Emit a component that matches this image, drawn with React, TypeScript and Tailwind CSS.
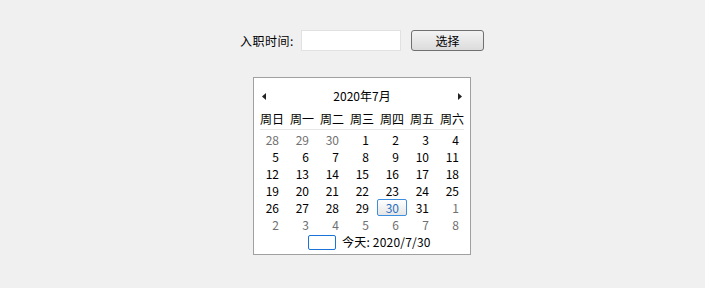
import React from 'react';

const font = { fontFamily: '"Noto Sans CJK SC", "Noto Sans", sans-serif' };

const weekNames = ['周日', '周一', '周二', '周三', '周四', '周五', '周六'];

type Day = { n: number; muted?: boolean; selected?: boolean };

const weeks: Day[][] = [
  [{ n: 28, muted: true }, { n: 29, muted: true }, { n: 30, muted: true }, { n: 1 }, { n: 2 }, { n: 3 }, { n: 4 }],
  [{ n: 5 }, { n: 6 }, { n: 7 }, { n: 8 }, { n: 9 }, { n: 10 }, { n: 11 }],
  [{ n: 12 }, { n: 13 }, { n: 14 }, { n: 15 }, { n: 16 }, { n: 17 }, { n: 18 }],
  [{ n: 19 }, { n: 20 }, { n: 21 }, { n: 22 }, { n: 23 }, { n: 24 }, { n: 25 }],
  [{ n: 26 }, { n: 27 }, { n: 28 }, { n: 29 }, { n: 30, selected: true }, { n: 31 }, { n: 1, muted: true }],
  [
    { n: 2, muted: true },
    { n: 3, muted: true },
    { n: 4, muted: true },
    { n: 5, muted: true },
    { n: 6, muted: true },
    { n: 7, muted: true },
    { n: 8, muted: true },
  ],
];

const Arrow: React.FC<{ dir: 'left' | 'right' }> = ({ dir }) => (
  <svg width="4" height="7" viewBox="0 0 4 7">
    {dir === 'left' ? <polygon points="4,0 4,7 0,3.5" fill="#222" /> : <polygon points="0,0 0,7 4,3.5" fill="#222" />}
  </svg>
);

const Calendar: React.FC = () => (
  <div className="w-[218px] h-[178px] border border-[#a0a0a0] bg-white flex flex-col text-[12px] leading-none" style={font}>
    <div className="h-[26px] mt-[5px] flex items-center px-[8px]">
      <Arrow dir="left" />
      <div className="flex-1 text-center text-black">2020年7月</div>
      <Arrow dir="right" />
    </div>
    <div className="flex pl-[3px] h-[20px] items-center">
      {weekNames.map((w) => (
        <div key={w} className="w-[30px] text-center text-black">
          {w}
        </div>
      ))}
    </div>
    <div className="mx-[6px] h-px bg-[#e6e6e6]" />
    <div className="flex flex-col pl-[3px] mt-[1px]">
      {weeks.map((week, i) => (
        <div key={i} className="flex h-[17px]">
          {week.map((d, j) => (
            <div
              key={j}
              className={
                d.selected
                  ? 'w-[30px] h-[17px] flex items-center justify-end pr-[7px] rounded-[2px] border border-[#3c8ee0] bg-gradient-to-b from-white to-[#e6e6e6] text-[#2a6fc0]'
                  : d.muted
                  ? 'w-[30px] h-[17px] flex items-center justify-end pr-[8px] text-[#707070]'
                  : 'w-[30px] h-[17px] flex items-center justify-end pr-[8px] text-black'
              }
            >
              {d.n}
            </div>
          ))}
        </div>
      ))}
    </div>
    <div className="flex items-center pl-[54px] mt-[1px] h-[16px]">
      <div className="w-[28px] h-[15px] border border-[#1a73d9] rounded-[2px] bg-white" />
      <span className="ml-[6px] text-black tracking-[0.2px]">今天: 2020/7/30</span>
    </div>
  </div>
);

export default function App() {
  return (
    <div className="w-[705px] h-[288px] bg-[#f0f0f0] overflow-hidden" style={font}>
      <div className="flex items-center pt-[30px] pl-[240px] text-[12px]">
        <span className="w-[55px] text-black tracking-[0.5px]">入职时间:</span>
        <input className="ml-[6px] w-[100px] h-[21px] bg-white border border-[#e1e1e1] outline-none" />
        <button className="ml-[10px] w-[73px] h-[21px] rounded-[3px] border border-[#707070] bg-gradient-to-b from-[#f3f3f3] to-[#dcdcdc] text-black text-[12px]">
          选择
        </button>
      </div>
      <div className="pl-[253px] mt-[26px]">
        <Calendar />
      </div>
    </div>
  );
}
